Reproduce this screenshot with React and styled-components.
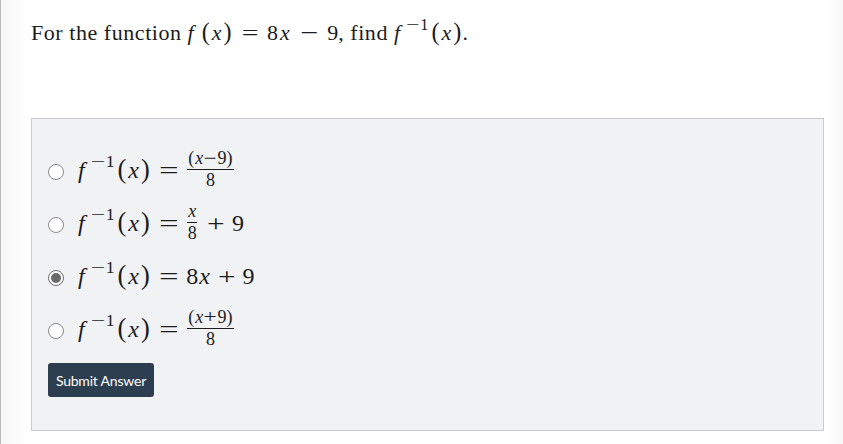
import React from "react";
import styled, { createGlobalStyle } from "styled-components";

const Global = createGlobalStyle`
  html, body {
    margin: 0;
    padding: 0;
    background: #ffffff;
  }
  body {
    font-family: "Liberation Serif", "Times New Roman", serif;
    color: #1c1c1c;
  }
`;

const Page = styled.div`
  box-sizing: border-box;
  width: 843px;
  height: 444px;
  border-left: 1px solid #b9b9b9;
  background: linear-gradient(to right, #f6f6f6 0px, #ffffff 26px, #ffffff 826px, #f7f7f7 843px);
  padding: 16px 19px 0 30px;
`;

const Question = styled.div`
  font-size: 22px;
  letter-spacing: 0.55px;
  line-height: 32px;
  height: 32px;
  display: flex;
  align-items: baseline;
  white-space: nowrap;
`;

const Formula = styled.span`
  display: inline-flex;
  align-items: baseline;
  height: 32px;
  line-height: 32px;
  font-size: ${(p) => p.$size || 24}px;
  letter-spacing: 0;
  margin: ${(p) => p.$margin || "0"};
`;

const V = styled.span`
  font-style: italic;
  margin: ${(p) => p.$m || "0 1px"};
`;

const Paren = styled.span`
  font-size: 1.1em;
  margin: 0 1px;
`;

/* operators are stretched a little, Computer Modern ones are wider than Times */
const Op = styled.span`
  display: inline-block;
  transform: scaleX(${(p) => p.$sx || 1.35});
  margin: 0 ${(p) => p.$gap || 10}px;
`;

const Sup = styled.span`
  display: inline-flex;
  align-items: baseline;
  font-size: 0.74em;
  position: relative;
  top: -0.6em;
  margin: 0 2px 0 5px;
`;

const Frac = styled.span`
  display: inline-flex;
  flex-direction: column;
  align-items: center;
  font-size: 18px;
  line-height: 16px;
  height: 16px;
  position: relative;
  top: -14px;
  margin: 0 3px 0 1px;
`;

const Num = styled.span`
  display: flex;
  align-items: baseline;
  justify-content: center;
  padding: 0 1px 3px;
  border-bottom: 1px solid #1c1c1c;
  align-self: stretch;
  white-space: nowrap;
`;

const Den = styled.span`
  padding-top: 2px;
`;

const Box = styled.div`
  box-sizing: border-box;
  margin-top: 70px;
  width: 793px;
  height: 313px;
  background: #f1f2f4;
  border: 1px solid #c8ccd1;
  padding: 26px 15px 0 16px;
  display: flex;
  flex-direction: column;
`;

const Options = styled.div`
  display: flex;
  flex-direction: column;
`;

const Row = styled.label`
  display: flex;
  align-items: center;
  height: 53px;
  & > ${Formula} {
    margin-bottom: 6px;
  }
`;

const Radio = styled.span`
  box-sizing: border-box;
  width: 16px;
  height: 16px;
  border-radius: 50%;
  border: 1px solid ${(p) => (p.$checked ? "#6e6e6e" : "#8a8a8a")};
  background: #ffffff;
  margin-right: 14px;
  flex-shrink: 0;
  display: flex;
  align-items: center;
  justify-content: center;
  &::after {
    content: "";
    display: ${(p) => (p.$checked ? "block" : "none")};
    width: 10px;
    height: 10px;
    border-radius: 50%;
    background: #6a6a6a;
  }
`;

const Button = styled.button`
  align-self: flex-start;
  margin-top: 6px;
  width: 106px;
  height: 34px;
  border: none;
  border-radius: 3px;
  background: #2c3e50;
  color: #ffffff;
  font-family: Lato, "Open Sans", sans-serif;
  font-size: 14px;
  padding: 0;
  letter-spacing: -0.2px;
`;

function FInv() {
  return (
    <>
      <V $m="0">f</V>
      <Sup>
        <Op $sx={1.45} $gap={3}>−</Op>1
      </Sup>
      <Paren>(</Paren>
      <V>x</V>
      <Paren>)</Paren>
    </>
  );
}

const options = [
  {
    rhs: (
      <Frac>
        <Num>
          (<V $m="0 0 0 1px">x</V>
          <Op $sx={1.3} $gap={2}>−</Op>9)
        </Num>
        <Den>8</Den>
      </Frac>
    ),
  },
  {
    rhs: (
      <>
        <Frac>
          <Num>
            <V $m="0">x</V>
          </Num>
          <Den>8</Den>
        </Frac>
        <Op $sx={1.3} $gap={9}>+</Op>9
      </>
    ),
  },
  {
    checked: true,
    rhs: (
      <>
        8<V $m="0 1px">x</V>
        <Op $sx={1.3} $gap={9}>+</Op>9
      </>
    ),
  },
  {
    rhs: (
      <Frac>
        <Num>
          (<V $m="0 0 0 1px">x</V>
          <Op $sx={1.3} $gap={2}>+</Op>9)
        </Num>
        <Den>8</Den>
      </Frac>
    ),
  },
];

export default function App() {
  return (
    <>
      <Global />
      <Page>
        <Question>
          For the function&nbsp;
          <Formula $size={22}>
            <V $m="0 7px 0 0">f</V>
            <Paren>(</Paren>
            <V>x</V>
            <Paren>)</Paren>
            <Op $gap={11}>=</Op>8<V $m="0 1px 0 2px">x</V>
            <Op $sx={1.45} $gap={12}>−</Op>9
          </Formula>
          , find&nbsp;
          <Formula $size={22}>
            <FInv />
          </Formula>
          .
        </Question>
        <Box>
          <Options>
            {options.map((o, i) => (
              <Row key={i}>
                <Radio $checked={o.checked} />
                <Formula $size={24}>
                  <FInv />
                  <Op $sx={1.45} $gap={11}>=</Op>
                  {o.rhs}
                </Formula>
              </Row>
            ))}
          </Options>
          <Button>Submit Answer</Button>
        </Box>
      </Page>
    </>
  );
}
